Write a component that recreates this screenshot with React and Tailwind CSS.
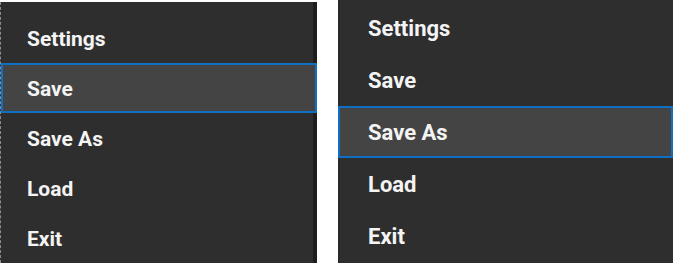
import React from "react";

const items = ["Settings", "Save", "Save As", "Load", "Exit"];

const MenuPanel = ({ active, rowClass, textClass, padClass }) => (
  <ul className="flex flex-col">
    {items.map((item) => (
      <li
        key={item}
        className={
          item === active
            ? `${rowClass} ${padClass} flex items-center bg-[#444444] border-2 border-[#0f6fc3]`
            : `${rowClass} ${padClass} flex items-center border-2 border-transparent`
        }
      >
        <span className={`${textClass} font-bold text-[#f4f4f4] leading-none`}>{item}</span>
      </li>
    ))}
  </ul>
);

const App = () => {
  return (
    <div
      className="flex w-[673px] h-[263px] bg-white overflow-hidden"
      style={{ fontFamily: "Roboto, 'Liberation Sans', sans-serif" }}
    >
      <div className="w-[317px] mt-[2px] pt-[11px] bg-[#2e2e2e] border-l border-dashed border-[#8c8c8c] shadow-[inset_-4px_0_0_#1d1d1d]">
        <MenuPanel
          active="Save"
          rowClass="h-[50px]"
          textClass="text-[21px]"
          padClass="pl-[24px] pt-[2px]"
        />
      </div>
      <div className="ml-[21px] flex-1 bg-[#2e2e2e] pt-[2px] shadow-[inset_2px_0_0_#2a2a2a]">
        <MenuPanel
          active="Save As"
          rowClass="h-[52px]"
          textClass="text-[22px]"
          padClass="pl-[28px] pt-[1px]"
        />
      </div>
    </div>
  );
};

export default App;
